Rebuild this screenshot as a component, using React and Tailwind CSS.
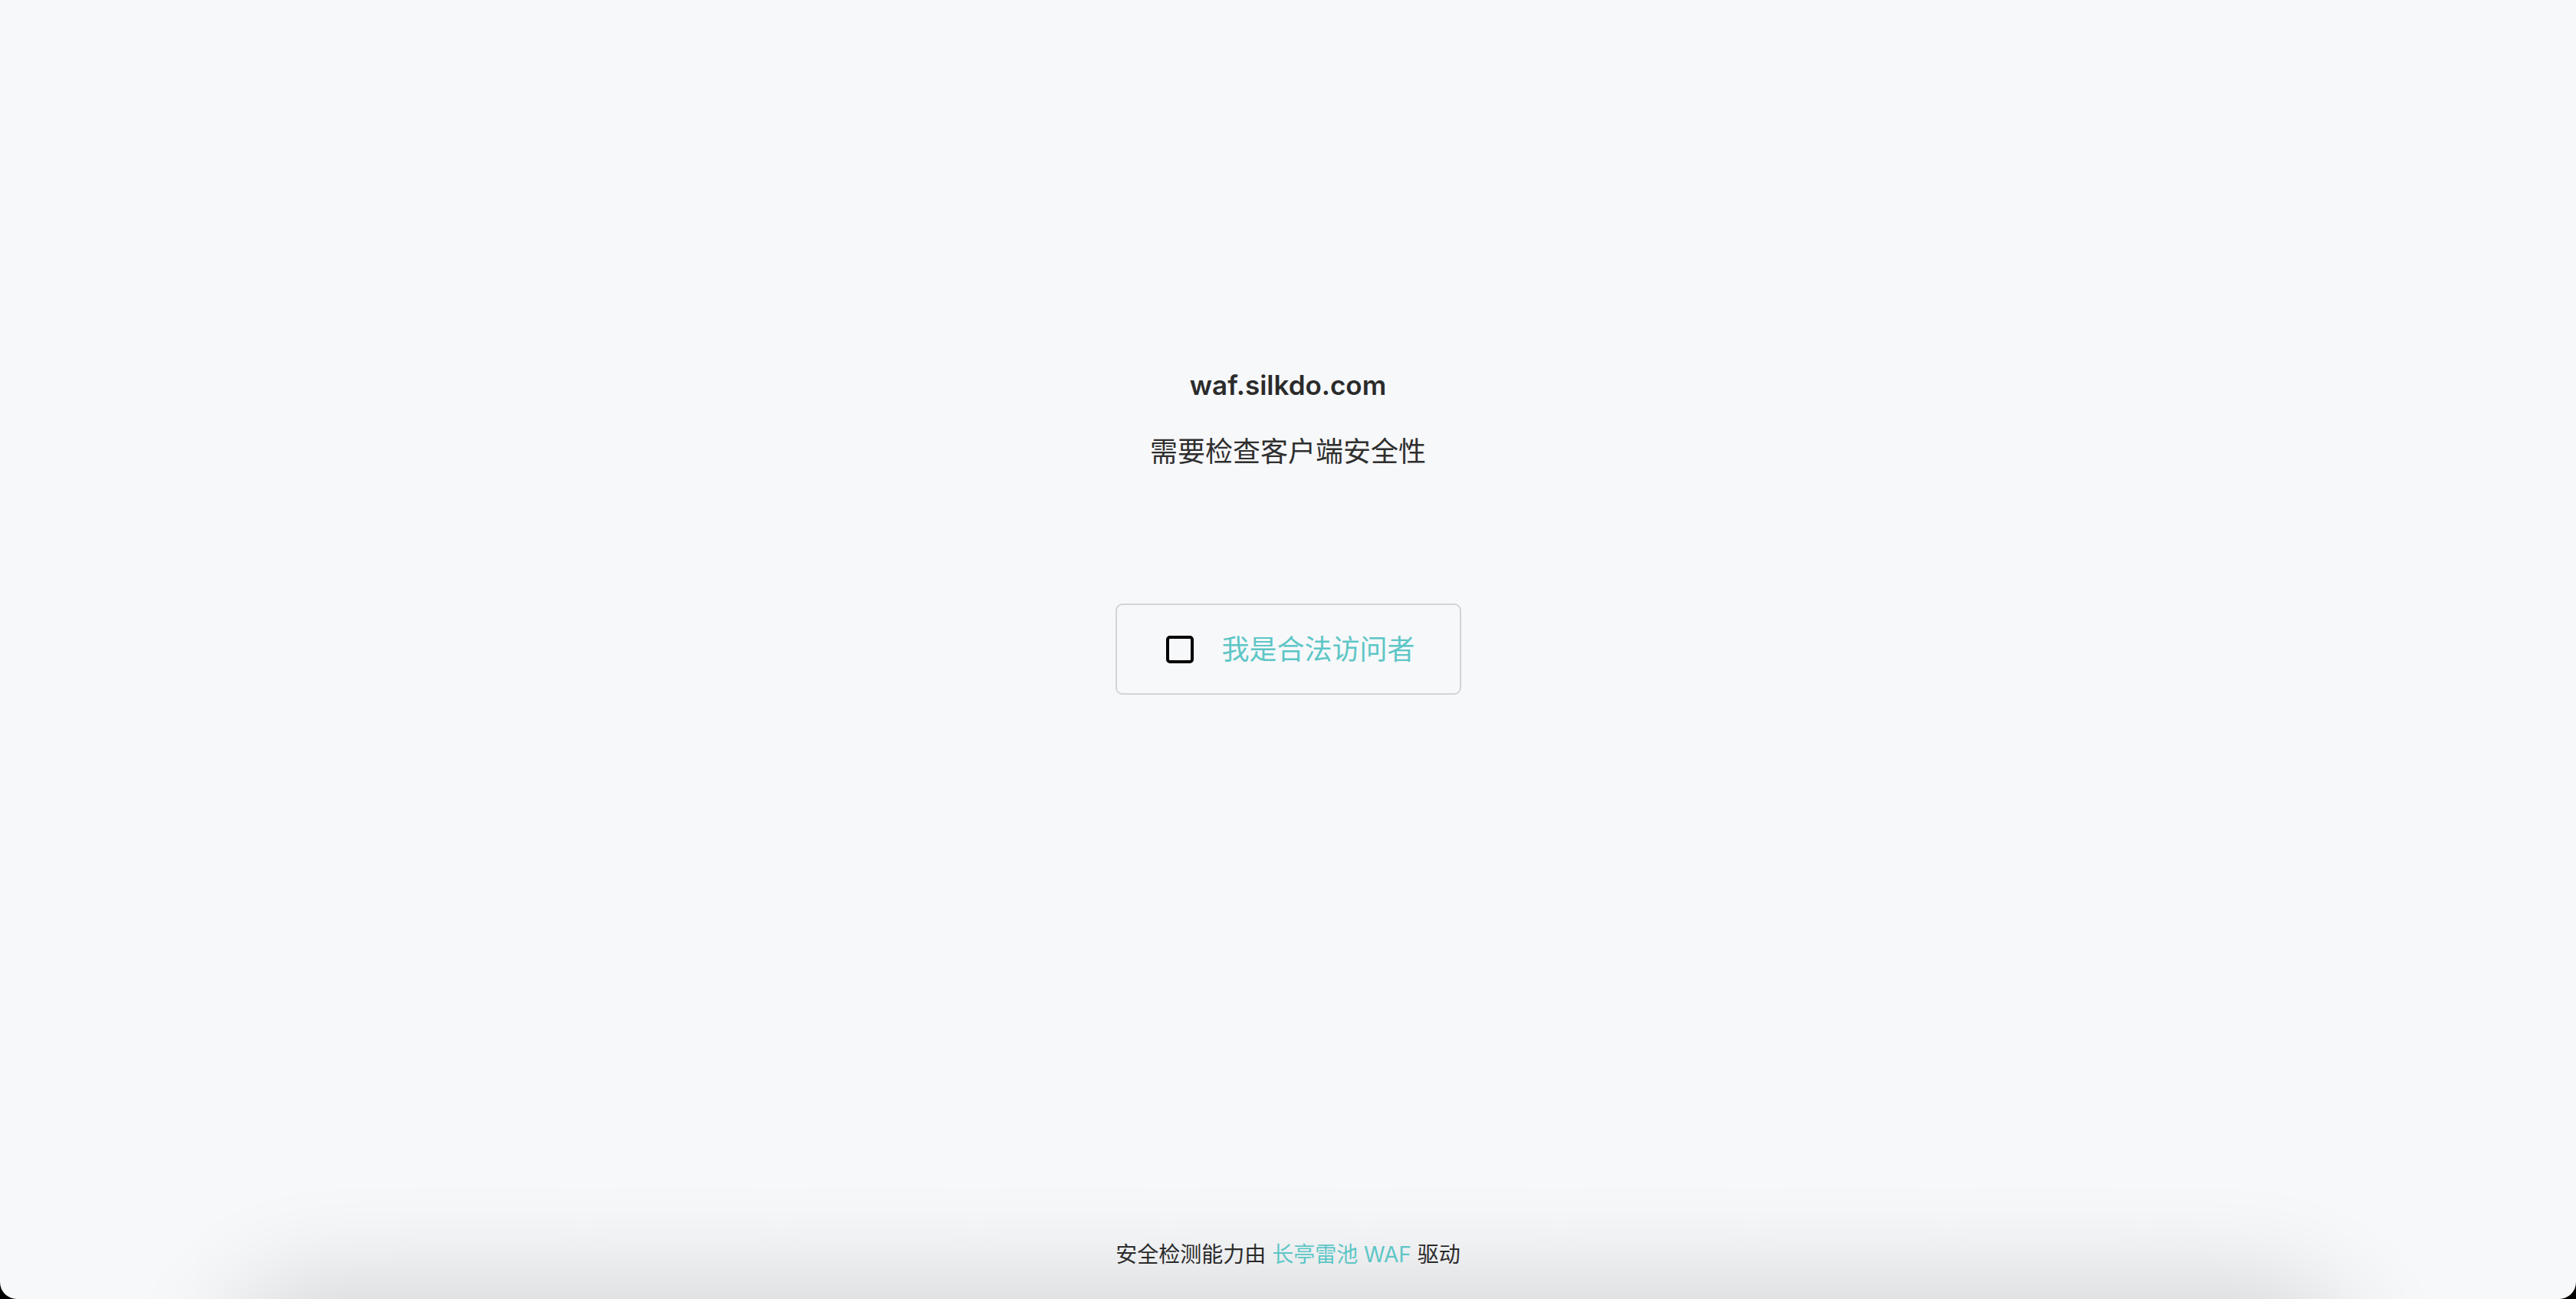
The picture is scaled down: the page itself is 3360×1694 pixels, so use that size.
import React from "react";

export default function App() {
  const font = { fontFamily: 'Inter, "Noto Sans CJK SC", sans-serif' };
  return (
    <div className="w-full h-[1694px] bg-black overflow-hidden" style={font}>
      <div className="relative w-full h-[1694px] bg-[#f7f8fa] rounded-b-[22px] overflow-hidden flex flex-col items-center">
        <div className="pointer-events-none absolute left-[330px] right-[330px] top-[1720px] h-[200px] rounded-[80px] shadow-[0_0_140px_40px_rgba(0,0,0,0.16)]" />
        <div className="pt-[476px] leading-[52px] text-[35px] font-semibold text-[#2b2b2b]">
          waf.silkdo.com
        </div>
        <div className="mt-[34px] leading-[54px] text-[36px] text-[#2f2f2f]">
          需要检查客户端安全性
        </div>
        <div className="mt-[171px] w-[451px] h-[119px] border-2 border-[#d4d4d8] rounded-[9px] flex items-center pl-[64px] cursor-pointer">
          <div className="w-[36px] h-[36px] border-[4px] border-black rounded-[5px] box-border" />
          <span className="ml-[37px] text-[36px] leading-[48px] text-[#5ec6c6]">我是合法访问者</span>
        </div>
        <div className="flex-1" />
        <div className="relative pb-[38px] text-[28px] leading-[40px] text-[#2b2b2b]">
          安全检测能力由 <span className="text-[#5ec6c6]">长亭雷池 WAF</span> 驱动
        </div>
      </div>
    </div>
  );
}
